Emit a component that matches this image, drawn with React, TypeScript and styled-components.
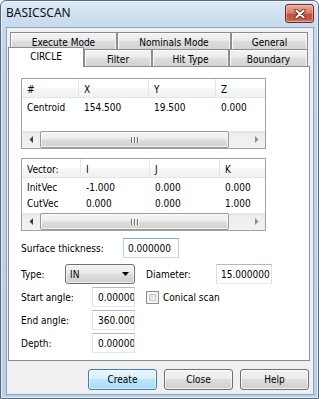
import React from "react";
import styled, { createGlobalStyle } from "styled-components";

const Global = createGlobalStyle`
  html, body { margin: 0; padding: 0; background: #ffffff; }
  body {
    width: 319px; height: 399px; overflow: hidden;
    font-family: "DejaVu Sans Condensed", "DejaVu Sans", "Liberation Sans", sans-serif;
    font-stretch: condensed;
    font-size: 10px; color: #000;
  }
  * { box-sizing: border-box; }
`;

const Window = styled.div`
  width: 319px; height: 399px;
  display: flex; flex-direction: column;
  border: 1px solid #5a6b80;
  border-radius: 6px 6px 0 0;
  background: linear-gradient(180deg, #dce8f5 0px, #c6d9ee 26px, #bed2ea 60px, #bcd0e8 100%);
  box-shadow: inset 0 0 0 1px rgba(255, 255, 255, 0.5);
`;

const TitleBar = styled.div`
  height: 26px; flex: none;
  display: flex; align-items: flex-start; justify-content: space-between;
  padding: 0 4px 0 5px;
`;

const Title = styled.span`
  font-family: "Noto Sans", "Open Sans", sans-serif;
  font-stretch: normal;
  font-size: 12px; line-height: 16px;
  margin-top: 4px; color: #111;
`;

const CloseButton = styled.div`
  width: 29px; height: 19px; margin-top: 3px;
  border: 1px solid #6b2a22;
  border-radius: 3px;
  background: linear-gradient(180deg, #e9a99a 0%, #d9806d 45%, #c8503b 55%, #c75a44 85%, #d98a72 100%);
  box-shadow: inset 0 0 0 1px rgba(255, 220, 210, 0.45);
  display: flex; align-items: center; justify-content: center;
`;

const Client = styled.div`
  flex: 1;
  margin: 0 4px 3px 5px;
  border: 1px solid #8fa3ba;
  background: #f0f0f0;
  display: flex; flex-direction: column;
  padding: 4px 3px 4px 1px;
`;

const TabControl = styled.div`
  flex: 1; display: flex; flex-direction: column;
`;

const TabRow = styled.div<{ $back?: boolean }>`
  display: flex; align-items: flex-end; flex: none;
  height: 17px;
  padding-left: ${(p) => (p.$back ? 2 : 0)}px;
`;

const Tab = styled.div<{ $w: number; $active?: boolean }>`
  flex: none;
  width: ${(p) => p.$w}px;
  height: ${(p) => (p.$active ? 20 : 17)}px;
  margin-bottom: ${(p) => (p.$active ? -1 : 0)}px;
  position: relative;
  z-index: ${(p) => (p.$active ? 2 : 1)};
  border: 1px solid #898c95;
  border-bottom: none;
  background: ${(p) =>
    p.$active
      ? "#ffffff"
      : "linear-gradient(180deg, #f3f3f3 0%, #ececec 45%, #dedede 50%, #d3d3d3 100%)"};
  box-shadow: ${(p) => (p.$active ? "none" : "inset 1px 1px 0 #fbfbfb, inset -1px 0 0 #f4f4f4")};
  display: flex; align-items: center; justify-content: center;
  padding-top: ${(p) => (p.$active ? 0 : 2)}px;
  padding-bottom: ${(p) => (p.$active ? 2 : 0)}px;
  white-space: nowrap;
`;

const Panel = styled.div`
  flex: 1;
  border: 1px solid #898c95;
  background: #ffffff;
  padding: 11px 0 0 12px;
  display: flex; flex-direction: column;
`;

const List = styled.div<{ $h: number; $gap?: number }>`
  width: 245px; height: ${(p) => p.$h}px; flex: none;
  margin-top: ${(p) => p.$gap ?? 0}px;
  border: 1px solid #9ea2a8;
  background: #fff;
  display: flex; flex-direction: column;
  overflow: hidden;
`;

const HeaderRow = styled.div`
  display: flex; height: 19px; flex: none;
  background: linear-gradient(180deg, #ffffff 0%, #ffffff 45%, #f6f7f8 55%, #f1f2f4 100%);
  border-bottom: 1px solid #e3e5e8;
`;

const HeadCell = styled.div<{ $w?: number }>`
  ${(p) => (p.$w ? `width: ${p.$w}px; flex: none;` : "flex: 1;")}
  padding: 2px 0 0 5px;
  border-right: ${(p) => (p.$w ? "1px solid #e3e6ea" : "none")};
  display: flex; align-items: center;
  white-space: nowrap;
`;

const Rows = styled.div`
  flex: 1; padding-top: 1px;
`;

const DataRow = styled.div`
  display: flex; height: 16px; align-items: center;
`;

const Cell = styled.div<{ $w?: number }>`
  ${(p) => (p.$w ? `width: ${p.$w}px; flex: none;` : "flex: 1;")}
  padding-left: 5px;
  white-space: nowrap;
`;

const HScroll = styled.div`
  display: flex; height: 17px; flex: none;
  background: linear-gradient(180deg, #e3e3e3 0%, #eeeeee 20%, #f2f2f2 100%);
`;

const ScrollArrow = styled.div`
  width: 17px; flex: none;
  display: flex; align-items: center; justify-content: center;
`;

const Track = styled.div`
  flex: 1; display: flex; padding: 0 1px;
`;

const Thumb = styled.div`
  border: 1px solid #999999;
  border-radius: 2px;
  background: linear-gradient(180deg, #f6f6f6 0%, #ececec 45%, #dcdcdc 55%, #d2d2d2 100%);
  box-shadow: inset 0 0 0 1px rgba(255, 255, 255, 0.7);
  display: flex; align-items: center; justify-content: center; gap: 1px;
`;

const Grip = styled.span`
  width: 2px; height: 6px;
  border-left: 1px solid #6e6e6e;
  border-right: 1px solid #fafafa;
`;

const Form = styled.div`
  display: flex; flex-direction: column; margin-top: 7px;
`;

const FieldRow = styled.div`
  display: flex; align-items: center; height: 20px;
`;

const Label = styled.span<{ $w: number }>`
  width: ${(p) => p.$w}px; flex: none;
  white-space: nowrap;
`;

const TextBox = styled.div<{ $w: number; $hot?: boolean; $pad?: number }>`
  width: ${(p) => p.$w}px; height: 20px; flex: none;
  border: 1px solid;
  border-color: ${(p) =>
    p.$hot ? "#7fa8d3 #b4cfe9 #c3d9ee #b4cfe9" : "#b5b8bf #dcdfe5 #e3e9ef #dcdfe5"};
  background: #fff;
  padding-left: ${(p) => p.$pad ?? 4}px;
  overflow: hidden; white-space: nowrap;
  display: flex; align-items: center;
`;

const Grid = styled.div`
  display: grid;
  grid-template-columns: 114px auto;
  grid-auto-rows: 20px;
  column-gap: 11px; row-gap: 3px;
  margin-top: 6px;
`;

const Combo = styled.div`
  width: 70px; height: 20px; flex: none;
  border: 1px solid #707070; border-radius: 3px;
  background: linear-gradient(180deg, #f2f2f2 0%, #ebebeb 45%, #dddddd 50%, #cfcfcf 100%);
  box-shadow: inset 0 0 0 1px rgba(255, 255, 255, 0.6);
  display: flex; align-items: center; justify-content: space-between;
  padding: 0 5px 0 4px;
`;

const CheckBox = styled.span`
  width: 13px; height: 13px; flex: none;
  border: 1px solid #8f8f8f;
  background: linear-gradient(135deg, #d5d5d5 0%, #ececec 60%, #f6f6f6 100%);
  box-shadow: inset 0 0 0 2px #f4f4f4, inset 0 0 0 3px #c9c9c9;
  margin-right: 4px;
`;

const ButtonRow = styled.div`
  display: flex; justify-content: flex-end; gap: 7px;
  padding: 8px 1px 0 0;
  flex: none;
`;

const Button = styled.div<{ $default?: boolean }>`
  width: 69px; height: 21px;
  border: 1px solid ${(p) => (p.$default ? "#3c7fb1" : "#707070")};
  border-radius: 3px;
  background: ${(p) =>
    p.$default
      ? "linear-gradient(180deg, #eaf6fd 0%, #d9f0fc 45%, #bee6fd 50%, #a7d9f5 100%)"
      : "linear-gradient(180deg, #f2f2f2 0%, #ebebeb 45%, #dddddd 50%, #cfcfcf 100%)"};
  box-shadow: inset 0 0 0 1px ${(p) => (p.$default ? "rgba(255,255,255,0.55)" : "rgba(255,255,255,0.7)")};
  display: flex; align-items: center; justify-content: center;
`;

const Arrow = ({ dir, color }: { dir: "left" | "right"; color: string }) => (
  <svg width="4" height="7" viewBox="0 0 4 7">
    {dir === "left" ? (
      <polygon points="4,0 4,7 0.5,3.5" fill={color} />
    ) : (
      <polygon points="0,0 0,7 3.5,3.5" fill={color} />
    )}
  </svg>
);

const Scrollbar = () => (
  <HScroll>
    <ScrollArrow>
      <Arrow dir="left" color="#404040" />
    </ScrollArrow>
    <Track>
      <Thumb style={{ width: 189 }}>
        <Grip />
        <Grip />
        <Grip />
      </Thumb>
    </Track>
    <ScrollArrow>
      <Arrow dir="right" color="#8e8e8e" />
    </ScrollArrow>
  </HScroll>
);

export default function App() {
  return (
    <>
      <Global />
      <Window>
        <TitleBar>
          <Title>BASICSCAN</Title>
          <CloseButton>
            <svg width="12" height="10" viewBox="0 0 12 10">
              <path d="M2.2 1.6 L9.8 8.4 M9.8 1.6 L2.2 8.4" stroke="#5a2018" strokeWidth="3.6" strokeLinecap="round" />
              <path d="M2.2 1.6 L9.8 8.4 M9.8 1.6 L2.2 8.4" stroke="#ffffff" strokeWidth="2" strokeLinecap="round" />
            </svg>
          </CloseButton>
        </TitleBar>
        <Client>
          <TabControl>
            <TabRow $back>
              <Tab $w={107}>Execute Mode</Tab>
              <Tab $w={114}>Nominals Mode</Tab>
              <Tab $w={77}>General</Tab>
            </TabRow>
            <TabRow>
              <Tab $w={76} $active>CIRCLE</Tab>
              <Tab $w={68}>Filter</Tab>
              <Tab $w={77}>Hit Type</Tab>
              <Tab $w={79}>Boundary</Tab>
            </TabRow>
            <Panel>
              <List $h={71}>
                <HeaderRow>
                  <HeadCell $w={57}>#</HeadCell>
                  <HeadCell $w={70}>X</HeadCell>
                  <HeadCell $w={67}>Y</HeadCell>
                  <HeadCell>Z</HeadCell>
                </HeaderRow>
                <Rows>
                  <DataRow>
                    <Cell $w={57}>Centroid</Cell>
                    <Cell $w={70}>154.500</Cell>
                    <Cell $w={67}>19.500</Cell>
                    <Cell>0.000</Cell>
                  </DataRow>
                </Rows>
                <Scrollbar />
              </List>
              <List $h={73} $gap={9}>
                <HeaderRow>
                  <HeadCell $w={59}>Vector:</HeadCell>
                  <HeadCell $w={69}>I</HeadCell>
                  <HeadCell $w={70}>J</HeadCell>
                  <HeadCell>K</HeadCell>
                </HeaderRow>
                <Rows>
                  <DataRow>
                    <Cell $w={59}>InitVec</Cell>
                    <Cell $w={69}>-1.000</Cell>
                    <Cell $w={70}>0.000</Cell>
                    <Cell>0.000</Cell>
                  </DataRow>
                  <DataRow>
                    <Cell $w={59}>CutVec</Cell>
                    <Cell $w={69}>0.000</Cell>
                    <Cell $w={70}>0.000</Cell>
                    <Cell>1.000</Cell>
                  </DataRow>
                </Rows>
                <Scrollbar />
              </List>
              <Form>
                <FieldRow>
                  <Label $w={102}>Surface thickness:</Label>
                  <TextBox $w={56} $hot>0.000000</TextBox>
                </FieldRow>
                <Grid>
                  <FieldRow>
                    <Label $w={44}>Type:</Label>
                    <Combo>
                      <span>IN</span>
                      <svg width="7" height="4" viewBox="0 0 7 4">
                        <polygon points="0,0 7,0 3.5,4" fill="#000" />
                      </svg>
                    </Combo>
                  </FieldRow>
                  <FieldRow>
                    <Label $w={70}>Diameter:</Label>
                    <TextBox $w={56}>15.000000</TextBox>
                  </FieldRow>
                  <FieldRow>
                    <Label $w={71}>Start angle:</Label>
                    <TextBox $w={43} $pad={5}>0.000000</TextBox>
                  </FieldRow>
                  <FieldRow>
                    <CheckBox />
                    <span>Conical scan</span>
                  </FieldRow>
                  <FieldRow>
                    <Label $w={71}>End angle:</Label>
                    <TextBox $w={43} $pad={5}>360.000000</TextBox>
                  </FieldRow>
                  <span />
                  <FieldRow>
                    <Label $w={71}>Depth:</Label>
                    <TextBox $w={43} $pad={5}>0.000000</TextBox>
                  </FieldRow>
                </Grid>
              </Form>
            </Panel>
          </TabControl>
          <ButtonRow>
            <Button $default>Create</Button>
            <Button>Close</Button>
            <Button>Help</Button>
          </ButtonRow>
        </Client>
      </Window>
    </>
  );
}
